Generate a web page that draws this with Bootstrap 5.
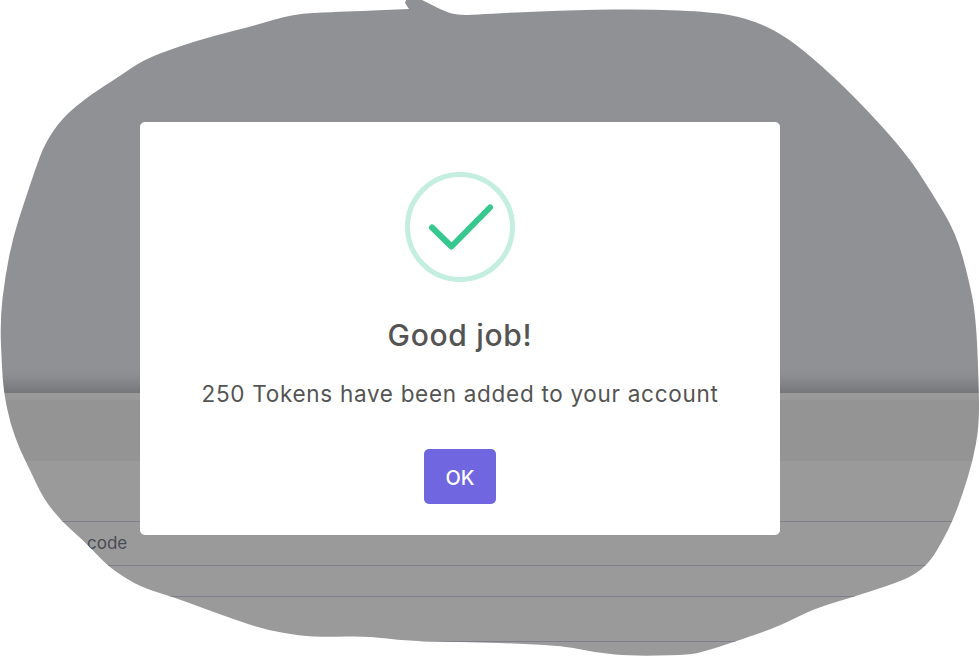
<!DOCTYPE html>
<html lang="en">
<head>
<meta charset="utf-8">
<title>Good job!</title>
<link rel="stylesheet" href="https://cdn.jsdelivr.net/npm/bootstrap@5.3.0/dist/css/bootstrap.min.css">
<style>
html,body{height:100%;margin:0;background:#fff;overflow:hidden}
body{font-family:"Inter","Liberation Sans",sans-serif}
.shape{height:656px;overflow:hidden;clip-path:path('M406 0 L422 0 L440 9 L448.5 12.5 Q457 16 478.5 14.5 Q500 13 539.5 11.5 Q579 10 612.5 9.5 Q646 9 679 10.5 Q712 12 729 15 Q746 18 762.5 25 Q779 32 795.5 44.5 Q812 57 834 77.5 Q856 98 881 125.5 Q906 153 919 173 Q932 193 944 213 Q956 233 962.5 256.5 Q969 280 972.5 298.5 Q976 317 977.5 353 Q979 390 979 408 Q979 427 976 443.5 Q973 460 968 476.5 Q963 493 958 506.5 Q953 520 948 530 Q943 540 936.5 551 Q930 562 921.5 569 Q913 576 901.5 580.5 Q890 585 871.5 591 Q853 597 833 603 Q813 609 796.5 617.5 Q780 626 760 633 Q740 640 720 646.5 Q700 653 691.5 654 Q683 655 658 655.5 Q633 656 615 654.5 Q597 653 578.5 649 Q560 645 513.5 643.5 Q467 642 437 641.5 Q407 641 387 638.5 Q367 636 347 636.5 Q327 637 313.5 636.5 Q300 636 281.5 632.5 Q263 629 248 624 Q233 619 216.5 613 Q200 607 186.5 602 Q173 597 156.5 592 Q140 587 126.5 578.5 Q113 570 106.5 564 Q100 558 91.5 549 Q83 540 72.5 531 Q62 522 52.5 510 Q43 498 36.5 484 Q30 470 25 460 Q20 450 15 436.5 Q10 423 7 408 Q4 393 3 381.5 Q2 370 1 345 Q0 320 2.5 298.5 Q5 277 9 257 Q13 237 19 218.5 Q25 200 30 185 Q35 170 40 156.5 Q45 143 54 130 Q63 117 76.5 106 Q90 95 103.5 86.5 Q117 78 130 69 Q143 60 160 53.5 Q177 47 195 41.5 Q213 36 233 31 Q253 26 273 20 Q293 14 313 13 Q333 12 346.5 11.5 Q360 11 384.5 10 L409 9 L405 3 Z')}
.hero{height:393px;background:linear-gradient(to bottom,#909195 0,#909195 370px,#8a8b8e 378px,#77787c 392px)}
.strip{height:7px;background:#999}
.thead-band{height:61px;background:#949494}
.rows{background:#9a9a9a;height:195px}
.data-row{border-top:1px solid #807f88;color:#4a4a55;font-size:17px;padding-left:30px;display:flex;align-items:center}
.r0{height:60px;border-top:0}.r1{height:44px}.r2{height:31px}.r3{height:45px}.r4{height:15px}
.overlay{position:fixed;inset:0;padding-right:59px}
.dialog{width:640px;height:413px;border-radius:5px;background:#fff;color:#545454;padding-top:50px}
.dialog-title{font-size:30px;font-weight:500;line-height:34px;margin:36px 0 0;color:#545454;letter-spacing:.7px}
.dialog-text{font-size:22.5px;line-height:30px;margin:27px 0 0;letter-spacing:.7px}
.ok-btn{width:72px;height:55px;margin-top:40px;background:#7066e0;border:0;border-radius:5px;color:#fff;font-size:20px;font-weight:500;padding:3px 0 0}
.ok-btn:hover{background:#7066e0;color:#fff}
.tick{display:block;width:110px;height:110px}
</style>
</head>
<body>
<div class="shape">
  <div class="hero"></div>
  <div class="strip"></div>
  <div class="thead-band"></div>
  <div class="rows">
    <div class="data-row r0"></div>
    <div class="data-row r1"><span>Promo code</span></div>
    <div class="data-row r2"></div>
    <div class="data-row r3"></div>
    <div class="data-row r4"></div>
  </div>
</div>
<div class="overlay d-flex align-items-center justify-content-center">
  <div class="dialog d-flex flex-column align-items-center text-center" role="dialog">
    <svg class="tick" viewBox="0 0 110 110" aria-hidden="true">
      <circle cx="55" cy="55" r="52.5" fill="none" stroke="#c3eee0" stroke-width="5"/>
      <path d="M27 55.5 L46.5 74.5 L85 35.5" fill="none" stroke="#37c88f" stroke-width="6" stroke-linecap="round" stroke-linejoin="round"/>
    </svg>
    <h2 class="dialog-title">Good job!</h2>
    <p class="dialog-text">250 Tokens have been added to your account</p>
    <button type="button" class="btn ok-btn">OK</button>
  </div>
</div>
<script src="https://cdn.jsdelivr.net/npm/bootstrap@5.3.0/dist/js/bootstrap.bundle.min.js"></script>
</body>
</html>
